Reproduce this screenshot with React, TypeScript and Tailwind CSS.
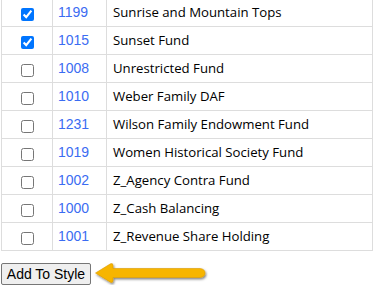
import { useState } from 'react';

const funds = [
  { id: '1199', name: 'Sunrise and Mountain Tops', checked: true },
  { id: '1015', name: 'Sunset Fund', checked: true },
  { id: '1008', name: 'Unrestricted Fund', checked: false },
  { id: '1010', name: 'Weber Family DAF', checked: false },
  { id: '1231', name: 'Wilson Family Endowment Fund', checked: false },
  { id: '1019', name: 'Women Historical Society Fund', checked: false },
  { id: '1002', name: 'Z_Agency Contra Fund', checked: false },
  { id: '1000', name: 'Z_Cash Balancing', checked: false },
  { id: '1001', name: 'Z_Revenue Share Holding', checked: false },
];

export default function App() {
  const [rows, setRows] = useState(funds);

  const toggle = (id: string) =>
    setRows((r) => r.map((f) => (f.id === id ? { ...f, checked: !f.checked } : f)));

  return (
    <div className="bg-white w-[374px] h-[286px] overflow-hidden pl-px">
      {/* Fund list */}
      <table className="border-collapse w-[372px] -mt-[2px]">
        <tbody>
          {rows.map((f) => (
            <tr key={f.id} className="h-[28px]">
              <td className="border border-[#dddddd] w-[51px] text-center p-0">
                <input
                  type="checkbox"
                  checked={f.checked}
                  onChange={() => toggle(f.id)}
                  className="w-[13px] h-[13px] m-0 align-middle accent-[#0075ff]"
                />
              </td>
              <td className="border border-[#dddddd] w-[54px] pl-[5px] pr-0 pt-0 pb-px text-[14px] leading-[18px] text-[#3b6cf2] font-['Liberation_Sans',Arial,sans-serif]">
                {f.id}
              </td>
              <td className="border border-[#dddddd] pl-[6px] pr-0 pt-0 pb-px text-[13.2px] leading-[18px] text-black font-['Open_Sans',sans-serif]">
                {f.name}
              </td>
            </tr>
          ))}
        </tbody>
      </table>

      {/* Action */}
      <div className="flex items-center mt-[12px]">
        <button className="h-[22px] w-[90px] border border-[#767676] rounded-[2px] bg-[#efefef] text-[14px] text-black font-['Liberation_Sans',Arial,sans-serif] leading-none">
          Add To Style
        </button>
        <svg width="116" height="22" viewBox="0 0 116 22" className="ml-[3px]">
          <defs>
            <filter id="sh" x="-10%" y="-30%" width="130%" height="170%">
              <feDropShadow dx="1" dy="1.5" stdDeviation="0.9" floodColor="#000" floodOpacity="0.5" />
            </filter>
          </defs>
          <path
            d="M1.5 10 L16.5 0.8 Q19 -0.2 19 2.5 L19 5.5 L106 5.5 Q111 6 111 10 Q111 14 106 14.5 L19 14.5 L19 17.5 Q19 20.2 16.5 19.2 Z"
            fill="#f7b500"
            stroke="#dc9c00"
            strokeWidth="0.6"
            strokeLinejoin="round"
            filter="url(#sh)"
          />
        </svg>
      </div>
    </div>
  );
}
